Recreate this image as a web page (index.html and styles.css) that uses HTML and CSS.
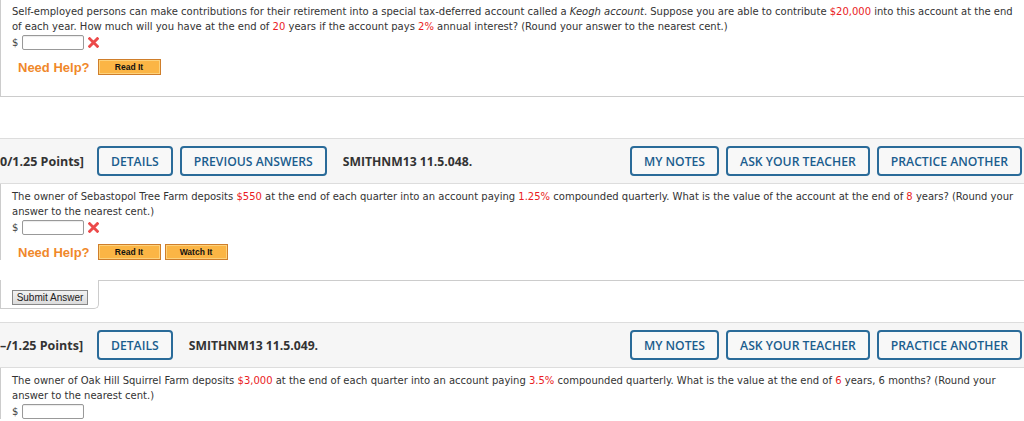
FILE: index.html
```html
<!DOCTYPE html>
<html>
<head>
<meta charset="utf-8">
<link rel="stylesheet" href="styles.css">
</head>
<body>
<div class="page">
  <section class="q q-first">
    <div class="qbody">
      <p class="qtext">Self-employed persons can make contributions for their retirement into a special tax-deferred account called a <i>Keogh account</i>. Suppose you are able to contribute <span class="hl">$20,000</span> into this account at the end of each year. How much will you have at the end of <span class="hl">20</span> years if the account pays <span class="hl">2%</span> annual interest? (Round your answer to the nearest cent.)</p>
      <div class="answer"><span class="dollar">$</span><span class="field"></span><svg class="wrong" viewBox="0 0 10 10" width="11" height="11"><path d="M1.5 1.5 L8.5 8.5 M8.5 1.5 L1.5 8.5" stroke="#ec4a4a" stroke-width="2.6" stroke-linecap="square"/></svg></div>
      <div class="help"><span class="help-label">Need Help?</span><span class="hbtn">Read It</span></div>
    </div>
  </section>

  <section class="q">
    <div class="qhead">
      <span class="pts">0/1.25 Points]</span>
      <span class="tab">DETAILS</span>
      <span class="tab">PREVIOUS ANSWERS</span>
      <span class="code">SMITHNM13 11.5.048.</span>
      <span class="spacer"></span>
      <span class="tab">MY NOTES</span>
      <span class="tab">ASK YOUR TEACHER</span>
      <span class="tab">PRACTICE ANOTHER</span>
    </div>
    <div class="qbody">
      <p class="qtext">The owner of Sebastopol Tree Farm deposits <span class="hl">$550</span> at the end of each quarter into an account paying <span class="hl">1.25%</span> compounded quarterly. What is the value of the account at the end of <span class="hl">8</span> years? (Round your answer to the nearest cent.)</p>
      <div class="answer"><span class="dollar">$</span><span class="field"></span><svg class="wrong" viewBox="0 0 10 10" width="11" height="11"><path d="M1.5 1.5 L8.5 8.5 M8.5 1.5 L1.5 8.5" stroke="#ec4a4a" stroke-width="2.6" stroke-linecap="square"/></svg></div>
      <div class="help"><span class="help-label">Need Help?</span><span class="hbtn">Read It</span><span class="hbtn">Watch It</span></div>
    </div>
    <div class="submit-row">
      <div class="submit-tab"><span class="submit">Submit Answer</span></div>
      <div class="submit-fill"></div>
    </div>
  </section>

  <section class="q q-last">
    <div class="qhead">
      <span class="pts">–/1.25 Points]</span>
      <span class="tab">DETAILS</span>
      <span class="code">SMITHNM13 11.5.049.</span>
      <span class="spacer"></span>
      <span class="tab">MY NOTES</span>
      <span class="tab">ASK YOUR TEACHER</span>
      <span class="tab">PRACTICE ANOTHER</span>
    </div>
    <div class="qbody">
      <p class="qtext">The owner of Oak Hill Squirrel Farm deposits <span class="hl">$3,000</span> at the end of each quarter into an account paying <span class="hl">3.5%</span> compounded quarterly. What is the value at the end of <span class="hl">6</span> years, 6 months? (Round your answer to the nearest cent.)</p>
      <div class="answer"><span class="dollar">$</span><span class="field"></span></div>
    </div>
  </section>
</div>
</body>
</html>
```

FILE: styles.css
```css
html, body {
  margin: 0;
  padding: 0;
  background: #ffffff;
}

.page {
  width: 1024px;
  overflow: hidden;
}

.q-first {
  margin-bottom: 41px;
}

.q-first .qbody {
  padding-top: 4px;
  padding-bottom: 21px;
  border-bottom: 1px solid #cccccc;
}

.qbody {
  border-left: 1px solid #cccccc;
  padding: 5px 3px 0 11px;
  font-family: "DejaVu Sans", Verdana, sans-serif;
  font-size: 10px;
  color: #333333;
}

.qtext {
  margin: 0;
  line-height: 15px;
}

.hl {
  color: #ea1c24;
}

.answer {
  display: flex;
  align-items: center;
  height: 16px;
}

.dollar {
  width: 10px;
  color: #444444;
}

.field {
  width: 60px;
  height: 13px;
  border: 1px solid #999999;
  border-radius: 2px;
  background: #ffffff;
  box-shadow: inset 0 1px 1px rgba(0,0,0,0.08);
}

.wrong {
  margin-left: 4px;
}

.help {
  display: flex;
  align-items: center;
  gap: 4px;
  margin: 9px 0 0 6px;
  height: 16px;
}

.help-label {
  font-family: "Liberation Sans", Arial, sans-serif;
  font-weight: bold;
  font-size: 13px;
  color: #f0882a;
  margin-right: 4px;
}

.hbtn {
  box-sizing: border-box;
  width: 63px;
  height: 16px;
  display: flex;
  align-items: center;
  justify-content: center;
  font-family: "Liberation Sans", Arial, sans-serif;
  font-weight: bold;
  font-size: 8.5px;
  color: #111111;
  background: #fbb545;
  border: 1px solid #cf7e2b;
  box-shadow: inset 0 0 0 1px #fdd27c;
}

.qhead {
  display: flex;
  align-items: center;
  gap: 7px;
  height: 44px;
  padding-right: 2px;
  background: #f6f6f6;
  border-top: 1px solid #dddddd;
  border-bottom: 1px solid #dddddd;
  font-family: "Open Sans", sans-serif;
  color: #333333;
}

.pts {
  flex: none;
  width: 90px;
  font-weight: 700;
  font-size: 12.5px;
}

.tab {
  flex: none;
  box-sizing: border-box;
  height: 30px;
  display: flex;
  align-items: center;
  padding: 0 12px;
  border: 2px solid #2a6b99;
  border-radius: 4px;
  background: #f8f8f8;
  color: #1b5d8e;
  font-weight: 600;
  font-size: 12.2px;
}

.code {
  flex: none;
  margin-left: 9px;
  font-weight: 700;
  font-size: 12.2px;
}

.spacer {
  flex: 1;
}

.submit-row {
  display: flex;
  margin-top: 20px;
  margin-bottom: 13px;
}

.submit-tab {
  box-sizing: border-box;
  width: 99px;
  height: 29px;
  border-left: 1px solid #cccccc;
  border-right: 1px solid #cccccc;
  border-bottom: 1px solid #cccccc;
  border-bottom-right-radius: 5px;
  padding: 7px 0 0 11px;
}

.submit {
  display: inline-block;
  box-sizing: border-box;
  width: 76px;
  height: 15px;
  line-height: 13px;
  text-align: center;
  font-family: "Liberation Sans", Arial, sans-serif;
  font-size: 10px;
  color: #222222;
  background: linear-gradient(#f2f2f2, #dcdcdc);
  border: 1px solid #888888;
}

.submit-fill {
  flex: 1;
  border-top: 1px solid #cccccc;
}

.q-last .qbody {
  padding-top: 5px;
}
```
